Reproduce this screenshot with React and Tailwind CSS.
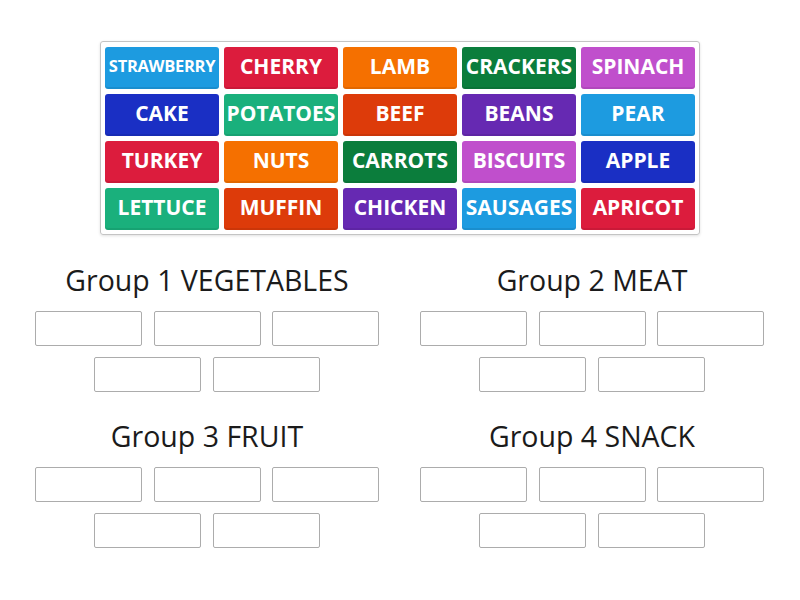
const tiles = [
  ["STRAWBERRY", "bg-[#1d9be0]", true],
  ["CHERRY", "bg-[#dc1c3d]"],
  ["LAMB", "bg-[#f57000]"],
  ["CRACKERS", "bg-[#0b7d3c]"],
  ["SPINACH", "bg-[#c04fcc]"],
  ["CAKE", "bg-[#1a2fc4]"],
  ["POTATOES", "bg-[#1ab07c]"],
  ["BEEF", "bg-[#dd3b0a]"],
  ["BEANS", "bg-[#6629b2]"],
  ["PEAR", "bg-[#1d9be0]"],
  ["TURKEY", "bg-[#dc1c3d]"],
  ["NUTS", "bg-[#f57000]"],
  ["CARROTS", "bg-[#0b7d3c]"],
  ["BISCUITS", "bg-[#c04fcc]"],
  ["APPLE", "bg-[#1a2fc4]"],
  ["LETTUCE", "bg-[#1ab07c]"],
  ["MUFFIN", "bg-[#dd3b0a]"],
  ["CHICKEN", "bg-[#6629b2]"],
  ["SAUSAGES", "bg-[#1d9be0]"],
  ["APRICOT", "bg-[#dc1c3d]"],
];

const groups = [
  "Group 1 VEGETABLES",
  "Group 2 MEAT",
  "Group 3 FRUIT",
  "Group 4 SNACK",
];

function Group({ title }) {
  return (
    <div className="flex flex-col items-center">
      <h2 className="
        text-[28.5px]
        leading-[36px]
        text-[#1b1b1b]
      ">
        {title}
      </h2>

      {/* SLOTS */}

      <div className="
        mt-[13px]
        flex flex-wrap justify-center
        gap-x-[11.5px] gap-y-[11px]
        w-[344px]
      ">
        {[0, 1, 2, 3, 4].map((i) => (
          <div
            key={i}
            className="
              w-[107px] h-[35px]
              border border-[#acacac]
              rounded-[2px]
              bg-white
            "
          />
        ))}
      </div>
    </div>
  );
}

export default function App() {
  return (
    <div
      className="w-[800px] h-[600px] bg-white overflow-hidden"
      style={{ fontFamily: '"Open Sans", "Liberation Sans", sans-serif' }}
    >
      {/* TILE BOARD */}

      <div className="flex justify-center pt-[41px]">
        <div className="
          w-[600px]
          border border-[#c4c4c4]
          rounded-[3px]
          shadow-[0_1px_3px_rgba(0,0,0,0.12)]
          px-[4px] pt-[5px] pb-[4px]
          grid grid-cols-5
          gap-[5px]
        ">
          {tiles.map(([label, color, small]) => (
            <div
              key={label}
              className={`
                h-[42px]
                pb-[3px]
                rounded-[3px]
                flex items-center justify-center
                text-white font-bold
                whitespace-nowrap
                shadow-[inset_0_-2px_0_rgba(0,0,0,0.08)]
                ${color}
                ${small ? "text-[16.5px] tracking-[-0.3px]" : "text-[21px]"}
              `}
            >
              {label}
            </div>
          ))}
        </div>
      </div>

      {/* GROUPS */}

      <div className="
        mt-[27px]
        ml-[35px]
        grid grid-cols-[344px_344px]
        gap-x-[41px] gap-y-[26px]
      ">
        {groups.map((g) => (
          <Group key={g} title={g} />
        ))}
      </div>
    </div>
  );
}
